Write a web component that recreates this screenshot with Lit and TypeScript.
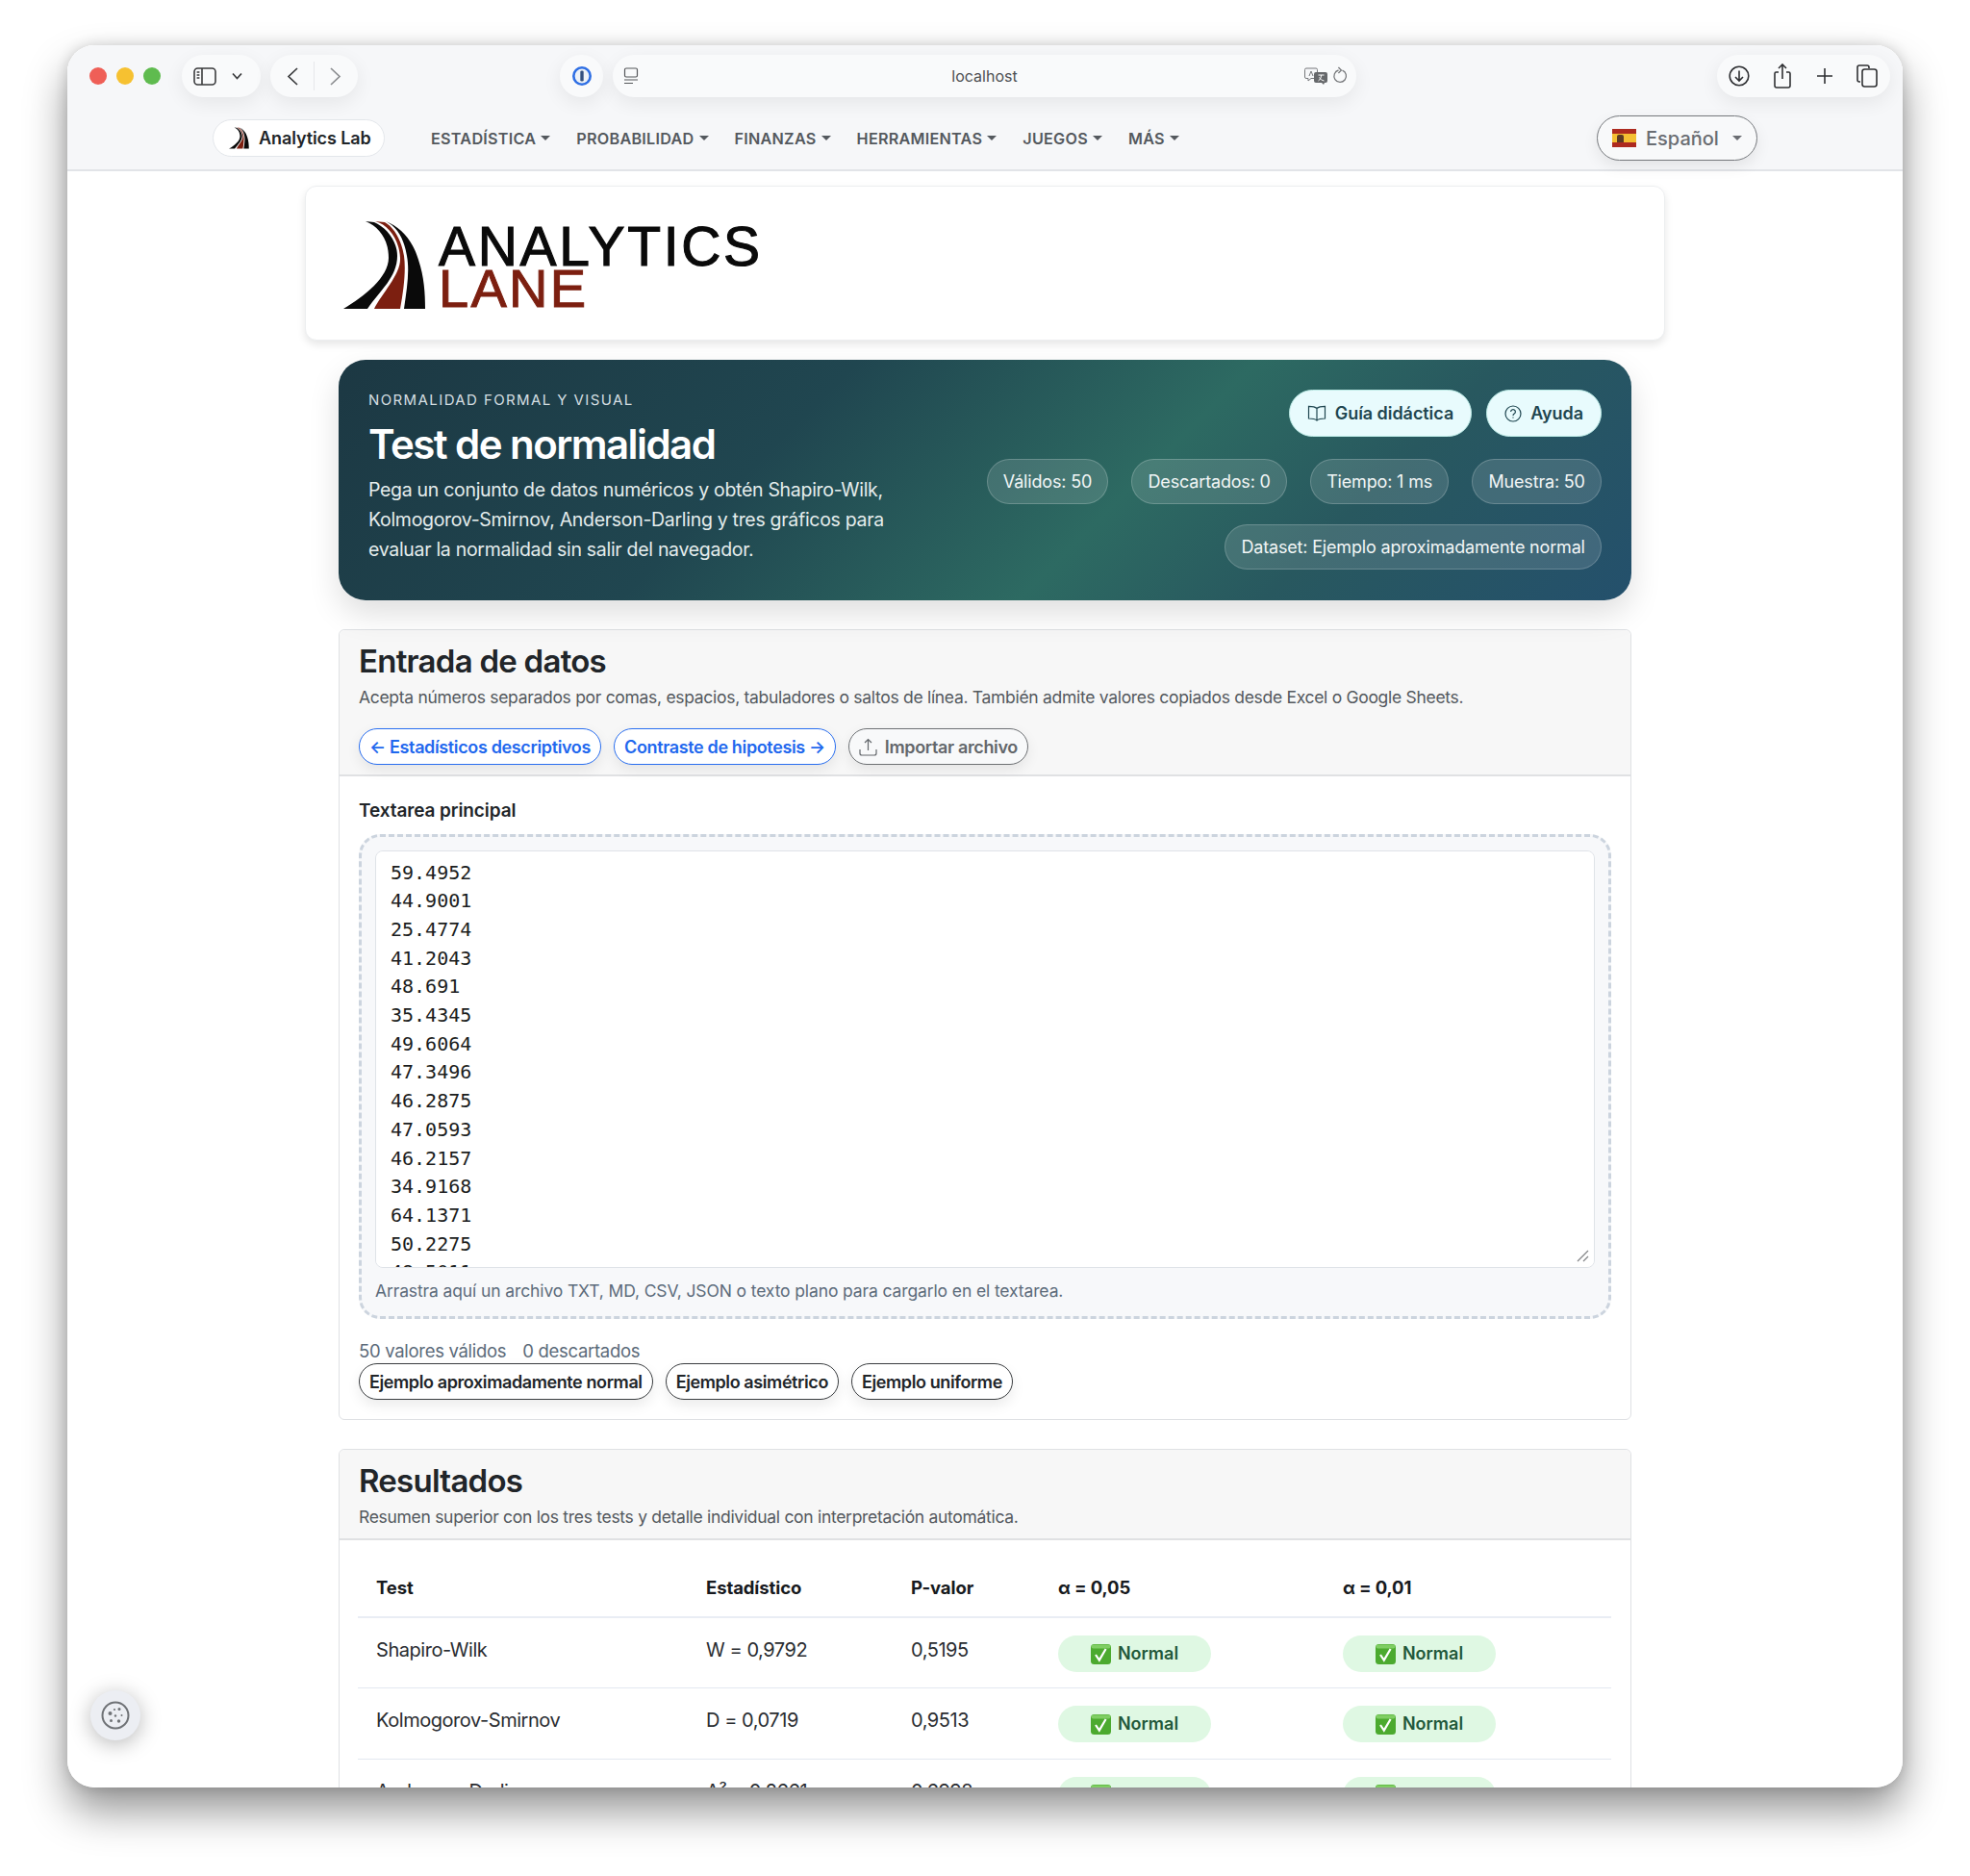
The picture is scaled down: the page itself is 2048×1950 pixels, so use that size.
import { LitElement, html, css, svg } from "lit";
import { customElement } from "lit/decorators.js";

const mark = svg`
  <path fill="#0a0a0a" d="M23 0C38 6 47 20 47 38C47 58 22 78 0 91H25C38 72 56 58 56 36C56 20 44 6 32 1Z"/>
  <path fill="#7c1f10" d="M33 0C48 4 58 20 59 38C60 55 40 75 32 91H59C63 70 65 50 63 36C60 18 52 6 43 1Z"/>
  <path fill="#0a0a0a" d="M44 0C60 6 72 20 78 40C84 58 85 75 85 91H63C66 70 69 52 66 36C63 18 56 6 44 0Z"/>`;

const values = ["59.4952","44.9001","25.4774","41.2043","48.691","35.4345","49.6064","47.3496","46.2875","47.0593","46.2157","34.9168","64.1371","50.2275","48.5011","52.1180","39.7720"];

const check = html`<svg class="ok" viewBox="0 0 21 21"><rect x="0" y="0" width="21" height="21" rx="3.5" fill="#4caa2f"/><rect x="0.5" y="0.5" width="20" height="4" rx="2" fill="#7fce63"/><path d="M5 11l3.8 5.6L15.6 5" fill="none" stroke="#fff" stroke-width="2.2"/></svg>`;

const badge = html`<span class="badge">${check}<span>Normal</span></span>`;

const rows = [
  ["Shapiro-Wilk", "W = 0,9792", "0,5195"],
  ["Kolmogorov-Smirnov", "D = 0,0719", "0,9513"],
  ["Anderson-Darling", "A² = 0,2661", "0,6998"],
];

@customElement("app-root")
export class AppRoot extends LitElement {
  static styles = css`
    :host { display: block; height: 1950px; background: #fff; overflow: hidden; font-family: Inter, "Liberation Sans", sans-serif; color: #212529; }
    * { box-sizing: border-box; }
    .stage { padding: 47px 70px 0; height: 1950px; }
    .win { position: relative; height: 1811px; border-radius: 28px; overflow: hidden; background: #fff; }
    .winshadow { border-radius: 28px; box-shadow: 0 24px 44px rgba(0,0,0,.42), 0 0 14px rgba(0,0,0,.16); }
    .toolbar { height: 131px; background: #f6f7f9; border-bottom: 2px solid #e2e4e8; padding-top: 10px; }
    .r1 { display: flex; align-items: center; height: 44px; padding-left: 23px; }
    .lights { display: flex; gap: 10px; margin-right: 22px; }
    .lights i { width: 18px; height: 18px; border-radius: 50%; }
    .l1 { background: #ef5f57; }
    .l2 { background: #f6c131; }
    .l3 { background: #5fbb4f; }
    .pill { height: 44px; border-radius: 22px; background: #f9fafb; box-shadow: 0 6px 20px rgba(0,0,0,.07); display: flex; align-items: center; }
    .p-side { width: 82px; gap: 16px; padding-left: 12px; }
    .p-nav { width: 91px; margin-left: 10px; padding-left: 17px; gap: 16px; }
    .sep { width: 1px; height: 30px; background: #e6e7ea; }
    .p-1p { width: 45px; margin-left: 210px; justify-content: center; }
    .p-addr { width: 773px; margin-left: 10px; padding: 0 9px 0 11px; justify-content: space-between; position: relative; }
    .p-addr .host { position: absolute; left: 0; right: 0; text-align: center; font: 400 16px Inter, sans-serif; color: #4d4f52; }
    .p-addr .rt { display: flex; gap: 4px; align-items: center; }
    .p-right { width: 180px; margin-left: 375px; justify-content: space-between; padding: 0 13px 0 12px; }
    .r2 { display: flex; align-items: center; height: 47px; margin-top: 19px; padding: 0 151px 0 151px; }
    .brand { width: 179px; height: 39px; border-radius: 20px; background: #fff; border: 1px solid #e3e6ea; display: flex; align-items: center; gap: 10px; padding-left: 16px; font-size: 18px; font-weight: 600; color: #212529; margin-right: 48px; letter-spacing: -.1px; }
    .menu { display: flex; gap: 27px; }
    .menu span { display: flex; align-items: center; gap: 5px; font-size: 16.2px; font-weight: 600; color: #54595e; letter-spacing: .25px; }
    .caret { width: 0; height: 0; border-left: 5px solid transparent; border-right: 5px solid transparent; border-top: 5.5px solid currentColor; }
    .lang { margin-left: auto; width: 167px; height: 47px; border-radius: 24px; border: 1px solid #75787c; background: #f8f9fa; box-shadow: 0 6px 16px rgba(0,0,0,.08); display: flex; align-items: center; padding-left: 15px; font-size: 20px; font-weight: 500; color: #6a6d72; }
    .lang .word { margin: 0 14px 0 10px; }
    .flag { width: 25px; height: 19px; background: linear-gradient(#ad2a1f 25%, #f4bf32 25%, #f4bf32 75%, #ad2a1f 75%); display: flex; align-items: center; padding-left: 5px; }
    .flag i { width: 7px; height: 8px; background: #5b3a24; border-radius: 2px 2px 0 0; }

    main { display: flex; flex-direction: column; align-items: center; padding-top: 15px; }
    .logo { width: 1414px; height: 161px; border: 1px solid #eceef0; border-radius: 12px; box-shadow: 0 4px 8px rgba(0,0,0,.1); display: flex; gap: 13px; padding: 36px 0 0 39px; background: #fff; }
    .logo svg { width: 86px; height: 91px; flex: none; }
    .wordmark { font-family: "Liberation Sans", sans-serif; margin-top: 3px; }
    .wordmark div { line-height: 46px; }
    .w1 { height: 44px; font-size: 57px; letter-spacing: 2.7px; color: #0a0a0a; -webkit-text-stroke: 1.1px #0a0a0a; }
    .w2 { height: 46px; font-size: 56px; letter-spacing: 2.3px; color: #7c1f10; -webkit-text-stroke: 1px #7c1f10; }

    .hero { position: relative; width: 1344px; height: 250px; margin-top: 20px; border-radius: 28px; padding: 31px 31px 0 31px; color: #fff; display: flex; justify-content: space-between;
      background: linear-gradient(135deg, #1c3843 0%, #204650 34%, #2d6a62 60%, #28585f 76%, #24506c 100%); box-shadow: 0 14px 32px rgba(0,0,0,.13); }
    .eyebrow { font-size: 15px; letter-spacing: 1.4px; color: #d5dfe2; line-height: 22px; }
    h1 { margin: 7px 0 0; font-size: 42px; line-height: 56px; font-weight: 600; letter-spacing: -1.55px; }
    .lead { margin: 4px 0 0; width: 560px; font-size: 19.5px; line-height: 31px; color: #e4ecec; letter-spacing: -.3px; }
    .dots { position: absolute; top: 8px; height: 30px; border-radius: 50%; background-image: radial-gradient(rgba(10,25,30,.45) 35%, transparent 40%); background-size: 2px 2px; }
    .d1 { left: 275px; width: 60px; }
    .d2 { left: 363px; width: 24px; }
    .side { display: flex; flex-direction: column; align-items: flex-end; }
    .actions { display: flex; gap: 15px; }
    .act { height: 49px; border-radius: 25px; background: #e8fbfd; border: 1px solid #bdebe6; color: #1f4650; font-size: 18px; font-weight: 600; display: flex; align-items: center; gap: 9px; padding: 0 18px; letter-spacing: -.05px; }
    .chips { display: flex; gap: 24px; margin-top: 23px; }
    .chip { height: 47px; border-radius: 24px; padding: 0 16.2px; display: flex; align-items: center; background: rgba(255,255,255,.13); border: 1px solid rgba(255,255,255,.2); font-size: 18px; color: #f2f6f6; white-space: nowrap; letter-spacing: -.17px; }
    .dataset { margin-top: 21px; }

    .card { width: 1344px; margin-top: 30px; border: 1px solid #dfe1e4; border-radius: 6px; background: #fff; flex: none; }
    .head { background: #f7f7f7; border-bottom: 2px solid #e0e1e3; padding: 10px 20px 0; border-radius: 6px 6px 0 0; }
    h2 { margin: 0; font-size: 33px; line-height: 44px; font-weight: 600; color: #212529; letter-spacing: -.75px; }
    .desc { font-size: 17.5px; line-height: 26px; color: #54595e; margin-top: 3px; letter-spacing: -.3px; }
    .links { display: flex; gap: 13px; margin-top: 19px; padding-bottom: 10px; }
    .lnk { height: 38px; border-radius: 20px; display: flex; align-items: center; gap: 5px; padding: 0 10px; font-size: 18px; font-weight: 600; white-space: nowrap; box-shadow: 0 5px 14px rgba(0,0,0,.08); background: #fff; letter-spacing: -.36px; }
    .blue { border: 1.5px solid #2a6ff0; color: #1f68ee; }
    .grey { border: 1.5px solid #6e7174; color: #63676b; background: #f8f9fa; gap: 8px; }
    .spacer { height: 9px; }
    .body { padding: 23px 20px 20px; }
    .lab { font-size: 19px; line-height: 26px; font-weight: 600; color: #212529; letter-spacing: -.1px; }
    .drop { margin-top: 11px; height: 504px; border: 3px dashed #ccd4de; border-radius: 22px; background: #f7f8fa; padding: 14px 14px 0; }
    .ta { position: relative; }
    .grip { position: absolute; right: 6px; bottom: 6px; width: 13px; height: 13px; }
    textarea { display: block; width: 100%; height: 434px; border: 1.5px solid #dfe3e8; border-radius: 8px; padding: 7.5px 15px; font-family: "DejaVu Sans Mono", "Liberation Mono", monospace; font-size: 20px; line-height: 29.7px; color: #1b1d20; background: #fff; resize: none; outline: none; scrollbar-width: none; overflow: auto; }
    .hint { font-size: 17.5px; line-height: 26px; color: #5c6b7a; margin-top: 11px; letter-spacing: -.12px; }
    .count { display: flex; gap: 17px; margin-top: 20px; font-size: 18.5px; line-height: 26px; color: #5c6b7a; letter-spacing: -.3px; }
    .ex { display: flex; gap: 13px; }
    .exb { height: 38px; border-radius: 20px; border: 1.5px solid #3a3d40; background: #fff; padding: 0 10px; display: flex; align-items: center; font-size: 18px; font-weight: 600; color: #212529; white-space: nowrap; box-shadow: 0 6px 14px rgba(0,0,0,.08); letter-spacing: -.4px; }
    .tw { padding: 18px 19px 0; }
    table { width: 1303px; table-layout: fixed; border-collapse: collapse; }
    .c1 { width: 343px; }
    .c2 { width: 213px; }
    .c3 { width: 153px; }
    .c4 { width: 296px; }
    .c5 { width: 298px; }
    th { height: 62px; text-align: left; font-size: 18.5px; font-weight: 700; color: #171a20; padding: 0 0 0 19px; border-bottom: 2px solid #e9edf4; letter-spacing: -.1px; }
    td { height: 73.5px; vertical-align: top; padding: 18px 0 0 19px; font-size: 20px; line-height: 30px; color: #2a2d31; border-bottom: 1.5px solid #e3e8f0; letter-spacing: -.45px; }
    .badge { width: 159px; height: 38px; border-radius: 19px; background: #dff8e3; color: #22583a; font-size: 18px; font-weight: 600; display: flex; align-items: center; justify-content: center; gap: 7px; letter-spacing: 0; }
    .ok { width: 21px; height: 21px; }
    .cookie { position: absolute; left: 24px; top: 1710px; width: 52px; height: 52px; border-radius: 50%; background: #eceef3; box-shadow: 0 4px 22px rgba(0,0,0,.28); display: flex; align-items: center; justify-content: center; }
  `;

  render() {
    const ic = "none";
    return html`
      <div class="stage"><div class="winshadow"><div class="win">
        <div class="toolbar">
          <div class="r1">
            <div class="lights"><i class="l1"></i><i class="l2"></i><i class="l3"></i></div>
            <div class="pill p-side">
              <svg width="24" height="19" viewBox="0 0 24 19" fill=${ic} stroke="#3a3b3d" stroke-width="1.6"><rect x="1" y="1" width="22" height="17" rx="3.5"/><path d="M9 1v17M3.6 5H6.4M3.6 8H6.4M3.6 11H6.4"/></svg>
              <svg width="11" height="8" viewBox="0 0 11 8" fill=${ic} stroke="#3a3b3d" stroke-width="1.7"><path d="M1 1.5l4.5 5 4.5-5"/></svg>
            </div>
            <div class="pill p-nav">
              <svg width="12" height="19" viewBox="0 0 12 19" fill=${ic} stroke="#3a3b3d" stroke-width="1.7"><path d="M11 1L2 9.5 11 18"/></svg>
              <span class="sep"></span>
              <svg width="12" height="19" viewBox="0 0 12 19" fill=${ic} stroke="#8b8d90" stroke-width="1.7"><path d="M1 1l9 8.5L1 18"/></svg>
            </div>
            <div class="pill p-1p">
              <svg width="22" height="22" viewBox="0 0 22 22"><circle cx="11" cy="11" r="10" fill="#2f6fe4"/><circle cx="11" cy="11" r="7.4" fill="#eef2f7"/><rect x="9.3" y="5.4" width="3.4" height="11.2" rx="1.4" fill="#33507e"/></svg>
            </div>
            <div class="pill p-addr">
              <svg width="16" height="18" viewBox="0 0 16 18" fill=${ic} stroke="#55575a" stroke-width="1.2"><rect x="1.5" y="1" width="13" height="9" rx="1.5"/><path d="M1 13h14M1 16.5h9"/></svg>
              <span class="host">localhost</span>
              <span class="rt">
                <svg width="25" height="18" viewBox="0 0 25 18"><path d="M2 1h10a1.5 1.5 0 0 1 1.5 1.5V10a1.5 1.5 0 0 1-1.5 1.5H7L4 14v-2.5H2A1.5 1.5 0 0 1 .5 10V2.5A1.5 1.5 0 0 1 2 1Z" fill="#f6f7f9" stroke="#77797c"/><path d="M5 9l2-5 2 5" fill="none" stroke="#77797c"/><path d="M12 5h10a2 2 0 0 1 2 2v7a2 2 0 0 1-2 2h-1l-1 2-2-2h-6a2 2 0 0 1-2-2V7a2 2 0 0 1 2-2Z" fill="#66686b"/><path d="M14.5 8h6M17.5 8c0 3-1.3 5-3 6M15.5 10.5c.9 1.6 2.6 3 5 3.5" fill="none" stroke="#fff"/></svg>
                <svg width="16" height="20" viewBox="0 0 16 20" fill=${ic} stroke="#77797c" stroke-width="1.3"><path d="M10.5 4.2A6.3 6.3 0 1 1 6.5 4"/><path d="M6.4 1l3 3-3 3"/></svg>
              </span>
            </div>
            <div class="pill p-right">
              <svg width="22" height="22" viewBox="0 0 22 22" fill=${ic} stroke="#2f3033" stroke-width="1.6"><circle cx="11" cy="11" r="9.8"/><path d="M11 5.5v10M7 12l4 4 4-4"/></svg>
              <svg width="20" height="26" viewBox="0 0 20 26" fill=${ic} stroke="#2f3033" stroke-width="1.6"><path d="M6 9H3.5A1.5 1.5 0 0 0 2 10.5V23a2 2 0 0 0 2 2h12a2 2 0 0 0 2-2V10.5A1.5 1.5 0 0 0 16.5 9H14M10 16V1.5M6 5l4-4 4 4"/></svg>
              <svg width="18" height="18" viewBox="0 0 18 18" fill=${ic} stroke="#2f3033" stroke-width="1.6"><path d="M9 1v16M1 9h16"/></svg>
              <svg width="22" height="24" viewBox="0 0 22 24" fill=${ic} stroke="#2f3033" stroke-width="1.6"><path d="M4 18H3a2 2 0 0 1-2-2V3a2 2 0 0 1 2-2h8a2 2 0 0 1 2 2v1"/><rect x="6" y="5" width="15" height="18" rx="2.5"/></svg>
            </div>
          </div>
          <div class="r2">
            <div class="brand"><svg width="21" height="23" viewBox="0 0 86 91">${mark}</svg><span>Analytics Lab</span></div>
            <div class="menu">
              ${["ESTADÍSTICA", "PROBABILIDAD", "FINANZAS", "HERRAMIENTAS", "JUEGOS", "MÁS"].map((m) => html`<span>${m}<i class="caret"></i></span>`)}
            </div>
            <div class="lang"><span class="flag"><i></i></span><span class="word">Español</span><i class="caret"></i></div>
          </div>
        </div>
        <main>
          <div class="logo">
            <svg viewBox="0 0 86 91">${mark}</svg>
            <div class="wordmark"><div class="w1">ANALYTICS</div><div class="w2">LANE</div></div>
          </div>
          <section class="hero">
            <i class="dots d1"></i><i class="dots d2"></i>
            <div>
              <div class="eyebrow">NORMALIDAD FORMAL Y VISUAL</div>
              <h1>Test de normalidad</h1>
              <p class="lead">Pega un conjunto de datos numéricos y obtén Shapiro-Wilk, Kolmogorov-Smirnov, Anderson-Darling y tres gráficos para evaluar la normalidad sin salir del navegador.</p>
            </div>
            <div class="side">
              <div class="actions">
                <span class="act"><svg width="20" height="17" viewBox="0 0 20 17" fill="none" stroke="#1f4650" stroke-width="1.2"><path d="M10 3.5C8.5 2 6 1.3 1.5 1.3V14c4.5 0 7 .6 8.5 2 1.5-1.4 4-2 8.5-2V1.3C14 1.3 11.5 2 10 3.5ZM10 3.5V16"/></svg>Guía didáctica</span>
                <span class="act"><svg width="18" height="18" viewBox="0 0 18 18" fill="none" stroke="#1f4650" stroke-width="1.2"><circle cx="9" cy="9" r="8"/><path d="M6.6 7a2.4 2.4 0 1 1 3.6 2.1c-.8.5-1.2 1-1.2 1.9M9 12.6v1"/></svg>Ayuda</span>
              </div>
              <div class="chips">
                <span class="chip">Válidos: 50</span><span class="chip">Descartados: 0</span><span class="chip">Tiempo: 1 ms</span><span class="chip">Muestra: 50</span>
              </div>
              <span class="chip dataset">Dataset: Ejemplo aproximadamente normal</span>
            </div>
          </section>

          <section class="card">
            <div class="head">
              <h2>Entrada de datos</h2>
              <div class="desc">Acepta números separados por comas, espacios, tabuladores o saltos de línea. También admite valores copiados desde Excel o Google Sheets.</div>
              <div class="links">
                <span class="lnk blue">← Estadísticos descriptivos</span>
                <span class="lnk blue">Contraste de hipotesis →</span>
                <span class="lnk grey"><svg width="19" height="19" viewBox="0 0 19 19" fill="none" stroke="#63676b" stroke-width="1.2"><path d="M9.5 13V1.5M6 5l3.5-3.5L13 5M1 12v4a2 2 0 0 0 2 2h13a2 2 0 0 0 2-2v-4"/></svg>Importar archivo</span>
              </div>
            </div>
            <div class="body">
              <div class="lab">Textarea principal</div>
              <div class="drop">
                <div class="ta">
                  <textarea .value=${values.join("\n")} spellcheck="false"></textarea>
                  <svg class="grip" viewBox="0 0 13 13" fill="none" stroke="#858789" stroke-width="1.3"><path d="M1 12L12 1M7 12l5-5"/></svg>
                </div>
                <div class="hint">Arrastra aquí un archivo TXT, MD, CSV, JSON o texto plano para cargarlo en el textarea.</div>
              </div>
              <div class="count"><span>50 valores válidos</span><span>0 descartados</span></div>
              <div class="ex"><span class="exb">Ejemplo aproximadamente normal</span><span class="exb">Ejemplo asimétrico</span><span class="exb">Ejemplo uniforme</span></div>
            </div>
          </section>

          <section class="card">
            <div class="head">
              <h2>Resultados</h2>
              <div class="desc">Resumen superior con los tres tests y detalle individual con interpretación automática.</div>
              <div class="spacer"></div>
            </div>
            <div class="tw">
              <table>
                <colgroup><col class="c1"><col class="c2"><col class="c3"><col class="c4"><col class="c5"></colgroup>
                <thead><tr><th>Test</th><th>Estadístico</th><th>P-valor</th><th>α = 0,05</th><th>α = 0,01</th></tr></thead>
                <tbody>
                  ${rows.map((r) => html`<tr><td>${r[0]}</td><td>${r[1]}</td><td>${r[2]}</td><td>${badge}</td><td>${badge}</td></tr>`)}
                </tbody>
              </table>
            </div>
          </section>
        </main>
        <div class="cookie">
          <svg width="30" height="30" viewBox="0 0 30 30"><circle cx="15" cy="15" r="13.5" fill="none" stroke="#6f7276" stroke-width="2"/><g fill="#6f7276"><circle cx="9.5" cy="13" r="2"/><circle cx="14" cy="9" r="1.1"/><circle cx="19" cy="8.5" r="1.5"/><circle cx="15" cy="15.5" r="1.2"/><circle cx="21.5" cy="15" r="1"/><circle cx="10.5" cy="20.5" r="1.5"/><circle cx="18.5" cy="21" r="1.7"/></g></svg>
        </div>
      </div></div></div>
    `;
  }
}
